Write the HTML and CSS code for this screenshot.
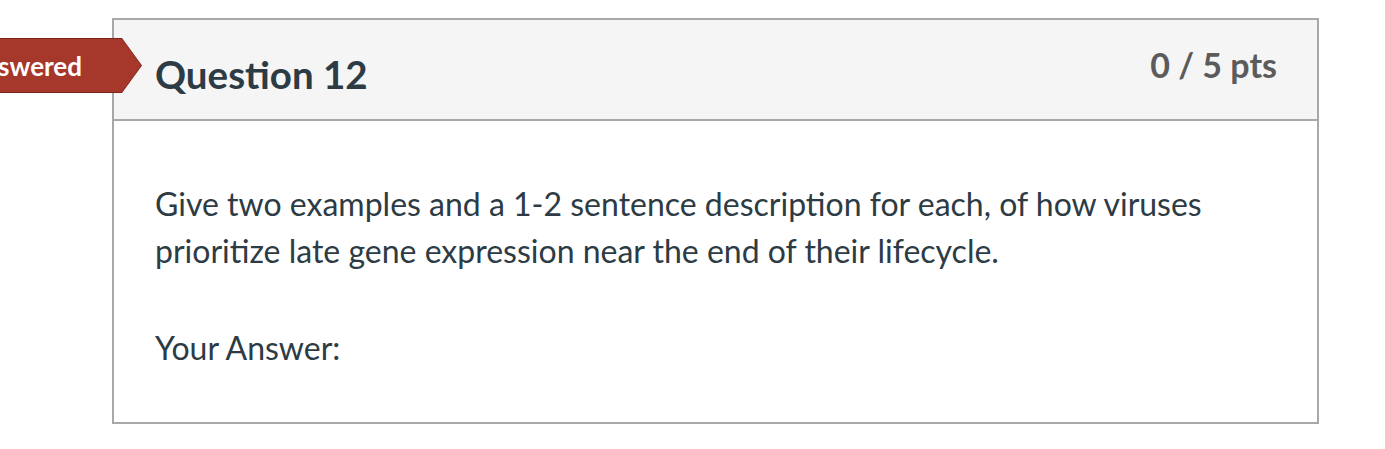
FILE: index.html
```html
<!DOCTYPE html>
<html>
<head>
<meta charset="utf-8">
<link rel="stylesheet" href="styles.css">
</head>
<body>
<div class="page">
  <div class="question">
    <div class="flag"><div class="flag-inner">Unanswered</div></div>
    <div class="header">
      <h2 class="title">Question 12</h2>
      <div class="points">0 / 5 pts</div>
    </div>
    <div class="content">
      <p class="text">Give two examples and a 1-2 sentence description for each, of how viruses prioritize late gene expression near the end of their lifecycle.</p>
      <p class="answer-label">Your Answer:</p>
    </div>
  </div>
</div>
</body>
</html>
```
FILE: styles.css
```css
html, body {
  margin: 0;
  padding: 0;
  background: #fff;
  overflow: hidden;
}
.page {
  padding: 18px 0 0 112px;
  width: 1207px;
  font-family: Lato, "Liberation Sans", sans-serif;
}
.question {
  position: relative;
  border: 2px solid #a8a8a8;
  background: #fff;
}
.flag {
  position: absolute;
  top: 18px;
  right: calc(100% - 28px);
  height: 55px;
  padding: 1px 1px 1px 0;
  box-sizing: border-box;
  background: #7e2418;
  clip-path: polygon(0 0, calc(100% - 20px) 0, 100% 50%, calc(100% - 20px) 100%, 0 100%);
}
.flag-inner {
  height: 100%;
  box-sizing: border-box;
  background: #a6372b;
  color: #fff;
  font-weight: 700;
  font-size: 26px;
  line-height: 55px;
  padding: 0 59px 0 20px;
  white-space: nowrap;
  clip-path: polygon(0 0, calc(100% - 19px) 0, 100% 50%, calc(100% - 19px) 100%, 0 100%);
}
.header {
  display: flex;
  justify-content: space-between;
  align-items: flex-start;
  background: #f5f5f5;
  border-bottom: 2px solid #a8a8a8;
  height: 99px;
  padding: 0 40px 0 41px;
}
.title {
  margin: 0;
  padding-top: 31px;
  font-size: 38.5px;
  line-height: 46px;
  font-weight: 700;
  color: #2d3b45;
}
.points {
  padding-top: 25px;
  font-size: 34px;
  line-height: 40px;
  font-weight: 700;
  color: #5b5b5b;
}
.content {
  padding: 59px 40px 51px 41px;
  color: #2d3b45;
  font-size: 32px;
  line-height: 47px;
}
.text {
  margin: 0;
}
.answer-label {
  margin: 50px 0 0;
}
```
